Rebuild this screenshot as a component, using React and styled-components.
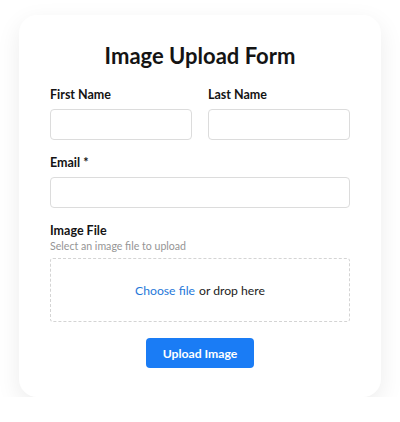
import React from 'react';
import styled, { createGlobalStyle } from 'styled-components';

const GlobalStyle = createGlobalStyle`
  body {
    margin: 0;
    background: #ffffff;
    font-family: Lato, "Open Sans", sans-serif;
  }
`

const Page = styled.div`
  display: flex;
  justify-content: center;
  padding-top: 15px;
`

const Card = styled.form`
  width: 362px;
  box-sizing: border-box;
  padding: 27px 31px 29px;
  background: #fff;
  border-radius: 18px;
  box-shadow: 0 8px 24px rgba(0, 0, 0, 0.08);
`

const Title = styled.h1`
  margin: 0 0 17px;
  text-align: center;
  font-size: 22px;
  line-height: 28px;
  font-weight: 700;
  color: #141414;
`

const Row = styled.div`
  display: grid;
  grid-template-columns: 1fr 1fr;
  gap: 16px;
`

const Field = styled.div`
  display: flex;
  flex-direction: column;
  margin-bottom: ${p => p.$gap || 15}px;
`

const Label = styled.label`
  font-size: 12.5px;
  line-height: 16px;
  font-weight: 700;
  color: #141414;
  margin-bottom: ${p => p.$tight ? 0 : 6}px;
`

const Hint = styled.span`
  font-size: 10.6px;
  line-height: 14px;
  color: #959595;
  margin-bottom: 5px;
`

const Input = styled.input`
  box-sizing: border-box;
  width: 100%;
  height: 31px;
  border: 1px solid #dcdcdc;
  border-radius: 4px;
  background: #fff;
  padding: 0 8px;
  font: inherit;
`

const DropZone = styled.div`
  height: 64px;
  box-sizing: border-box;
  border: 1px dashed #d4d4d4;
  border-radius: 3px;
  display: flex;
  align-items: center;
  justify-content: center;
  font-size: 12.2px;
  color: #222;
`

const ChooseLink = styled.span`
  color: #1f78d9;
  margin-right: 4px;
`

const Actions = styled.div`
  display: flex;
  justify-content: center;
`

const Button = styled.button`
  width: 108px;
  height: 30px;
  border: none;
  border-radius: 4px;
  background: #1a7cf5;
  color: #fff;
  font-family: inherit;
  font-size: 12.2px;
  font-weight: 700;
  cursor: pointer;
`

export default function App() {
  return (
    <>
      <GlobalStyle />
      <Page>
        <Card onSubmit={e => e.preventDefault()}>
          <Title>Image Upload Form</Title>
          <Row>
            <Field>
              <Label>First Name</Label>
              <Input type="text" />
            </Field>
            <Field>
              <Label>Last Name</Label>
              <Input type="text" />
            </Field>
          </Row>
          <Field>
            <Label>Email *</Label>
            <Input type="email" />
          </Field>
          <Field $gap={16}>
            <Label $tight>Image File</Label>
            <Hint>Select an image file to upload</Hint>
            <DropZone>
              <ChooseLink>Choose file</ChooseLink> or drop here
            </DropZone>
          </Field>
          <Actions>
            <Button type="submit">Upload Image</Button>
          </Actions>
        </Card>
      </Page>
    </>
  );
}
